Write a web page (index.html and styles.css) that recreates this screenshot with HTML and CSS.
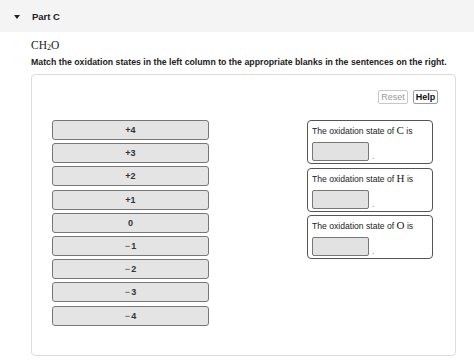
FILE: index.html
```html
<!DOCTYPE html>
<html>
<head>
<meta charset="utf-8">
<link rel="stylesheet" href="styles.css">
</head>
<body>
<div class="part-header">
  <span class="caret"></span>
  <span class="part-title">Part C</span>
</div>
<div class="content">
  <div class="formula">CH<sub>2</sub>O</div>
  <div class="instruction">Match the oxidation states in the left column to the appropriate blanks in the sentences on the right.</div>
  <div class="panel">
    <div class="toolbar">
      <button class="btn btn-reset">Reset</button>
      <button class="btn btn-help">Help</button>
    </div>
    <div class="columns">
      <div class="items">
        <div class="item">+4</div>
        <div class="item">+3</div>
        <div class="item">+2</div>
        <div class="item">+1</div>
        <div class="item">0</div>
        <div class="item"><span class="minus">−</span>1</div>
        <div class="item"><span class="minus">−</span>2</div>
        <div class="item"><span class="minus">−</span>3</div>
        <div class="item"><span class="minus">−</span>4</div>
      </div>
      <div class="targets">
        <div class="target">
          <div class="sentence">The oxidation state of <span class="el">C</span> is</div>
          <div class="blank-row"><span class="blank"></span><span class="dot">.</span></div>
        </div>
        <div class="target">
          <div class="sentence">The oxidation state of <span class="el">H</span> is</div>
          <div class="blank-row"><span class="blank"></span><span class="dot">.</span></div>
        </div>
        <div class="target">
          <div class="sentence">The oxidation state of <span class="el">O</span> is</div>
          <div class="blank-row"><span class="blank"></span><span class="dot">.</span></div>
        </div>
      </div>
    </div>
  </div>
</div>
</body>
</html>
```
FILE: styles.css
```css
html, body {
  margin: 0;
  padding: 0;
  background: #ffffff;
  font-family: "Liberation Sans", Arial, sans-serif;
  color: #222;
}
.part-header {
  height: 32px;
  background: #f4f4f4;
  display: flex;
  align-items: center;
  padding-left: 14px;
}
.caret {
  width: 0;
  height: 0;
  border-left: 3px solid transparent;
  border-right: 3px solid transparent;
  border-top: 4px solid #222;
  margin-top: 1px;
}
.part-title {
  margin-left: 12px;
  font-weight: bold;
  font-size: 9.5px;
  color: #222;
}
.content {
  padding-left: 31px;
  padding-right: 18px;
}
.formula {
  font-family: "Liberation Serif", "Times New Roman", serif;
  font-size: 11.5px;
  margin-top: 6px;
  height: 14px;
  line-height: 14px;
}
.formula sub {
  font-size: 8px;
  line-height: 0;
  vertical-align: -1px;
}
.instruction {
  margin-top: 5px;
  font-weight: bold;
  font-size: 8.75px;
  line-height: 11px;
  white-space: nowrap;
}
.panel {
  margin-top: 6px;
  width: 423px;
  height: 280px;
  border: 1px solid #dcdcdc;
  border-radius: 4px;
  box-sizing: content-box;
}
.toolbar {
  display: flex;
  justify-content: flex-end;
  gap: 5px;
  padding: 15px 17px 0 0;
}
.btn {
  height: 14px;
  padding: 0;
  font-family: "Liberation Sans", Arial, sans-serif;
  font-size: 9px;
  background: #fff;
  border-radius: 2px;
  line-height: 12px;
  margin: 0;
}
.btn-reset {
  width: 30px;
  color: #999;
  border: 1px solid #c8c8c8;
}
.btn-help {
  width: 25px;
  font-weight: bold;
  color: #111;
  border: 1px solid #999;
}
.columns {
  display: flex;
  justify-content: space-between;
  margin-top: 16px;
  padding: 0 22px 0 20px;
}
.items {
  display: flex;
  flex-direction: column;
  gap: 3.2px;
  width: 157px;
}
.item {
  height: 20px;
  box-sizing: border-box;
  border: 1.5px solid #777;
  border-radius: 3px;
  background: #e4e4e4;
  display: flex;
  align-items: center;
  justify-content: center;
  font-weight: bold;
  font-size: 9px;
  color: #333;
}
.minus {
  font-weight: normal;
  margin-right: 1px;
}
.targets {
  display: flex;
  flex-direction: column;
  gap: 3.5px;
  width: 126px;
}
.target {
  height: 44px;
  box-sizing: border-box;
  border: 1.5px solid #555;
  border-radius: 4px;
  padding: 4px 0 0 4px;
}
.sentence {
  font-size: 8.6px;
  line-height: 11px;
  color: #222;
}
.el {
  font-family: "Liberation Serif", "Times New Roman", serif;
  font-size: 11px;
}
.blank-row {
  display: flex;
  align-items: flex-end;
  margin-top: 5px;
}
.blank {
  width: 57px;
  height: 19px;
  box-sizing: border-box;
  border: 1.5px solid #777;
  border-radius: 2px;
  background: #e2e2e2;
}
.dot {
  font-size: 8px;
  margin-left: 3px;
  line-height: 8px;
  color: #555;
}
```
